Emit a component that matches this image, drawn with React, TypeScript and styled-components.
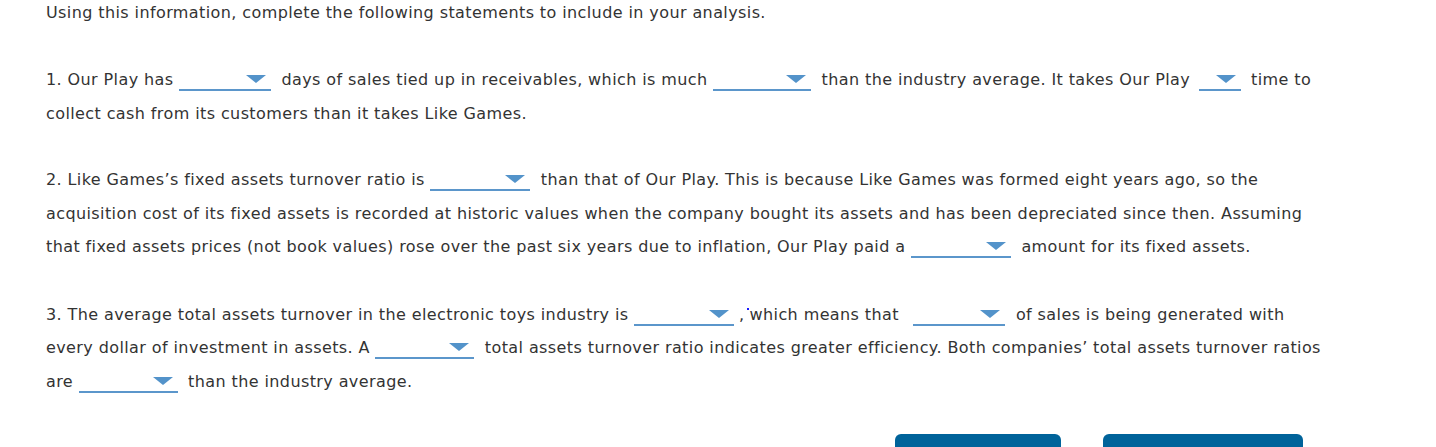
import React from "react";
import styled, { createGlobalStyle } from "styled-components";

const Global = createGlobalStyle`
  html, body { margin: 0; padding: 0; background: #fff; }
  body { font-family: "DejaVu Sans", Verdana, sans-serif; color: #333; }
`;

const Page = styled.div`
  width: 1436px;
  height: 447px;
  overflow: hidden;
  box-sizing: border-box;
  padding: 3px 0 0 46px;
  font-size: 16px;
  letter-spacing: 0.4px;
`;

const Intro = styled.p`
  margin: 0 0 40px;
  line-height: 20px;
`;

const Statement = styled.p<{ $gap: number }>`
  margin: 0 0 ${(p) => p.$gap}px;
  width: 1280px;
  line-height: 33.5px;
`;

const Select = styled.span<{ $w: number; $lead: number }>`
  position: relative;
  display: inline-block;
  width: ${(p) => p.$w}px;
  height: 20px;
  margin: 0 5px -6px ${(p) => p.$lead}px;
  border-bottom: 2px solid #5b96cb;
  box-sizing: border-box;
  vertical-align: baseline;
`;

const Caret = styled.span`
  position: absolute;
  right: 5px;
  top: 4px;
  width: 0;
  height: 0;
  border-left: 10px solid transparent;
  border-right: 10px solid transparent;
  border-top: 8px solid #5393ca;
`;

const Dot = styled.span`
  display: inline-block;
  width: 2px;
  height: 2px;
  background: #1a1aff;
  margin: 0 1px 0 2px;
  vertical-align: 10px;
`;

const ButtonRow = styled.div`
  display: flex;
  gap: 42px;
  margin-left: 849px;
`;

const Button = styled.button<{ $w: number }>`
  width: ${(p) => p.$w}px;
  height: 40px;
  border: none;
  border-radius: 6px;
  background: #00639a;
  color: #fff;
  font-family: "DejaVu Sans", Verdana, sans-serif;
  font-size: 15px;
`;

const Drop = ({ w, lead = 0 }: { w: number; lead?: number }) => (
  <Select $w={w} $lead={lead}>
    <Caret />
  </Select>
);

export default function App() {
  return (
    <Page>
      <Global />
      <Intro>Using this information, complete the following statements to include in your analysis.</Intro>
      <Statement $gap={33}>
        1. Our Play has <Drop w={92} /> days of sales tied up in receivables, which is much <Drop w={98} /> than the
        industry average. It takes Our Play <Drop w={42} lead={3} /> time to collect cash from its customers than it
        takes Like Games.
      </Statement>
      <Statement $gap={34}>
        2. Like Games’s fixed assets turnover ratio is <Drop w={100} /> than that of Our Play. This is because Like
        Games was formed eight years ago, so the acquisition cost of its fixed assets is recorded at historic values
        when the company bought its assets and has been depreciated since then. Assuming that fixed assets prices (not
        book values) rose over the past six years due to inflation, Our Play paid a <Drop w={100} /> amount for its
        fixed assets.
      </Statement>
      <Statement $gap={36}>
        3. The average total assets turnover in the electronic toys industry is <Drop w={100} />,<Dot />
        which means that <Drop w={92} lead={9} /> of sales is being generated with every dollar of investment in
        assets. A <Drop w={99} /> total assets turnover ratio indicates greater efficiency. Both companies’ total
        assets turnover ratios are <Drop w={99} /> than the industry average.
      </Statement>
      <ButtonRow>
        <Button $w={166} />
        <Button $w={200} />
      </ButtonRow>
    </Page>
  );
}
